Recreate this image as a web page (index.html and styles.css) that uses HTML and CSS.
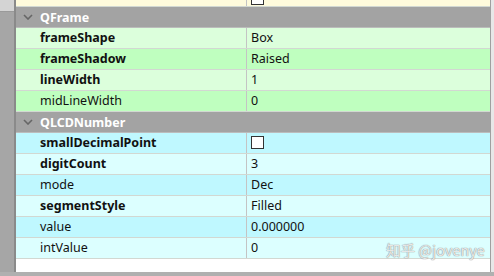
FILE: index.html
```html
<!DOCTYPE html>
<html lang="en">
<head>
    <meta charset="UTF-8">
    <title>Property Editor</title>
    <link rel="stylesheet" href="styles.css">
</head>
<body>

<div class="editor">
    <div class="sidebar">
        <div class="sidebar-top"></div>
    </div>

    <div class="panel">
        <div class="props">
            <div class="row yellow partial">
                <div class="name"></div>
                <div class="value"><span class="check"></span></div>
            </div>

            <div class="group">
                <svg class="chevron" width="10" height="6" viewBox="0 0 10 6"><path d="M1 1 L5 5 L9 1" fill="none" stroke="#666" stroke-width="1.6"/></svg>
                <span>QFrame</span>
            </div>
            <div class="row green-light">
                <div class="name bold">frameShape</div>
                <div class="value">Box</div>
            </div>
            <div class="row green-dark">
                <div class="name bold">frameShadow</div>
                <div class="value">Raised</div>
            </div>
            <div class="row green-light">
                <div class="name bold">lineWidth</div>
                <div class="value">1</div>
            </div>
            <div class="row green-dark">
                <div class="name">midLineWidth</div>
                <div class="value">0</div>
            </div>

            <div class="group">
                <svg class="chevron" width="10" height="6" viewBox="0 0 10 6"><path d="M1 1 L5 5 L9 1" fill="none" stroke="#666" stroke-width="1.6"/></svg>
                <span>QLCDNumber</span>
            </div>
            <div class="row cyan-dark">
                <div class="name bold">smallDecimalPoint</div>
                <div class="value"><span class="check"></span></div>
            </div>
            <div class="row cyan-light">
                <div class="name bold">digitCount</div>
                <div class="value">3</div>
            </div>
            <div class="row cyan-dark">
                <div class="name">mode</div>
                <div class="value">Dec</div>
            </div>
            <div class="row cyan-light">
                <div class="name bold">segmentStyle</div>
                <div class="value">Filled</div>
            </div>
            <div class="row cyan-dark">
                <div class="name">value</div>
                <div class="value">0.000000</div>
            </div>
            <div class="row cyan-light">
                <div class="name">intValue</div>
                <div class="value">0</div>
            </div>
        </div>
        <div class="blank"></div>
    </div>
    <div class="edge"></div>
</div>

<div class="watermark">知乎 @jovenye</div>

</body>
</html>
```

FILE: styles.css
```css
body {
    margin: 0;
    width: 494px;
    height: 276px;
    overflow: hidden;
    font-family: "Noto Sans", "Open Sans", sans-serif;
    font-size: 12.5px;
    color: #111;
    background-color: #a8a8a8;
    position: relative;
}

.editor {
    display: flex;
    height: 272px;
    border-bottom: 4px solid #b0b0b0;
}

.sidebar {
    width: 14px;
    background-color: #a6a6a6;
    border-right: 2px solid #8a8a8a;
}

.sidebar-top {
    height: 11px;
    background-color: #d4d4d4;
    border-bottom: 1px solid #9a9a9a;
}

.panel {
    flex: 1;
    display: flex;
    flex-direction: column;
    background-color: #fff;
    border-right: 1px solid #a0a0a0;
}

.props {
    display: flex;
    flex-direction: column;
}

.blank {
    flex: 1;
    background-color: #fff;
}

.edge {
    width: 3px;
    background-color: #e8e8e8;
}

.row {
    display: flex;
    height: 20px;
    border-bottom: 1px solid #d2d8d2;
    line-height: 20px;
}

.row.partial {
    height: 6px;
    overflow: hidden;
}

.name {
    width: 206px;
    padding-left: 24px;
    border-right: 1px solid #c4c4c4;
    white-space: nowrap;
}

.value {
    flex: 1;
    padding-left: 4px;
    white-space: nowrap;
}

.bold {
    font-weight: bold;
}

.check {
    display: inline-block;
    width: 11px;
    height: 11px;
    border: 1px solid #333;
    background-color: #fff;
    vertical-align: -2px;
}

.partial .check {
    vertical-align: top;
    margin-top: -8px;
}

.group {
    display: flex;
    align-items: center;
    height: 20px;
    border-bottom: 1px solid #bcbcbc;
    background-color: #a3a3a3;
    color: #fff;
    font-weight: bold;
}

.chevron {
    margin-left: 7px;
    margin-right: 7px;
}

.yellow { background-color: #fffbdc; }
.green-light { background-color: #dcffdc; }
.green-dark { background-color: #bfffbf; }
.cyan-light { background-color: #dcffff; }
.cyan-dark { background-color: #bff8ff; }

.watermark {
    position: absolute;
    left: 386px;
    top: 240px;
    white-space: nowrap;
    line-height: 20px;
    font-family: "Noto Sans CJK SC", sans-serif;
    font-size: 14.5px;
    color: rgba(255, 255, 255, 0.8);
    text-shadow: 0 0 1px #909090, 0 0 1px #909090;
}
```
